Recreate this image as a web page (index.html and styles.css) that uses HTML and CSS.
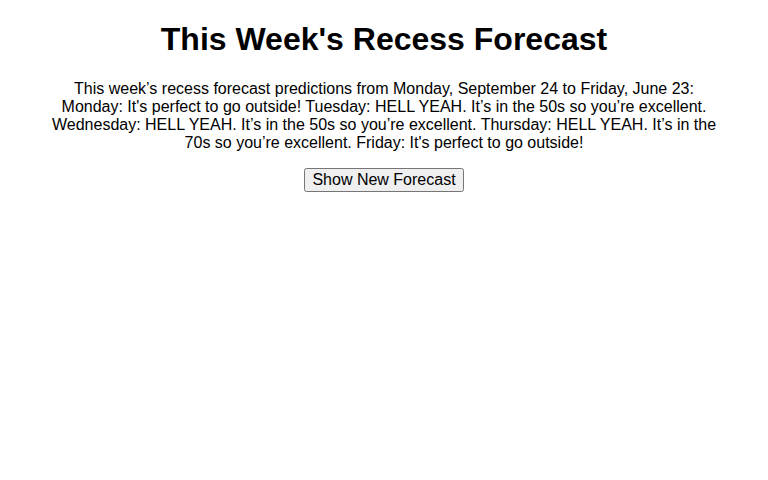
FILE: index.html
```html
<!DOCTYPE html>
<html>
<head>
<meta charset="utf-8">
<title>Recess Forecast</title>
<link rel="stylesheet" href="styles.css">
</head>
<body class="page">
<h1 class="title">This Week's Recess Forecast</h1>
<p class="forecast">This week’s recess forecast predictions from Monday, September 24 to Friday, June 23: Monday: It's perfect to go outside! Tuesday: HELL YEAH. It’s in the 50s so you’re excellent. Wednesday: HELL YEAH. It’s in the 50s so you’re excellent. Thursday: HELL YEAH. It’s in the 70s so you’re excellent. Friday: It's perfect to go outside!</p>
<button class="new-btn" type="button">Show New Forecast</button>
</body>
</html>
```
FILE: styles.css
```css
.page {
  font-family: "Liberation Sans", Arial, sans-serif;
  text-align: center;
  color: #000;
  background: #fff;
}
.title {
  font-size: 32px;
  font-weight: bold;
  margin-top: 13.44px;
}
.forecast {
  font-size: 16px;
  max-width: 672px;
  margin-left: auto;
  margin-right: auto;
}
.new-btn {
  font-family: "Liberation Sans", Arial, sans-serif;
  font-size: 16px;
}
```
